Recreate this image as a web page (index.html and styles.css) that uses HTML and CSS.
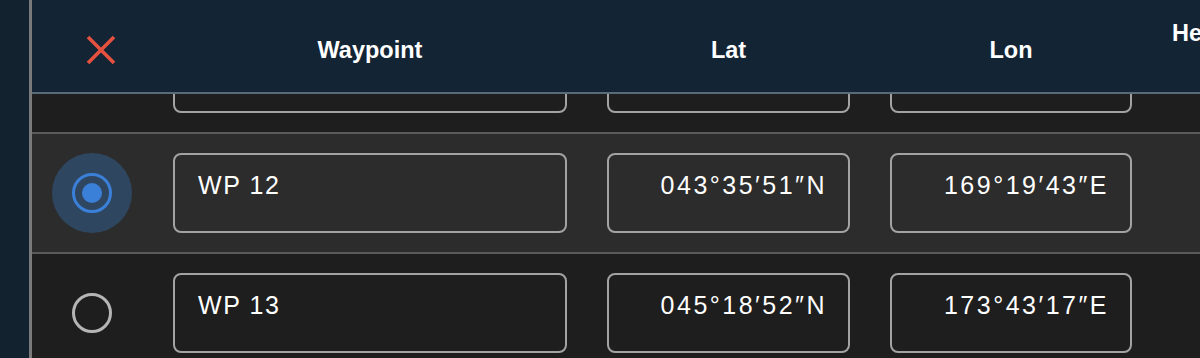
FILE: index.html
```html
<!DOCTYPE html>
<html lang="en">
<head>
<meta charset="utf-8">
<title>Waypoints</title>
<link rel="stylesheet" href="styles.css">
</head>
<body>
<div class="app">
  <aside class="sidebar"></aside>
  <main class="table">
    <header class="thead">
      <div class="th th-close">
        <svg class="close-icon" width="30" height="30" viewBox="0 0 30 30" aria-label="Close">
          <path d="M2 2 L28 28 M28 2 L2 28" stroke="#e4513f" stroke-width="3.6" stroke-linecap="butt" fill="none"/>
        </svg>
      </div>
      <div class="th">Waypoint</div>
      <div class="th">Lat</div>
      <div class="th">Lon</div>
      <div class="th th-wrap">Heading to Waypoint (°T)</div>
    </header>
    <div class="viewport">
      <div class="rows">
        <div class="row">
          <div class="cell cell-sel"><span class="radio"></span></div>
          <div class="field name"></div>
          <div class="field coord"></div>
          <div class="field coord"></div>
          <div class="cell"></div>
        </div>
        <div class="row row-selected">
          <div class="cell cell-sel"><span class="halo"><span class="radio radio-on"></span></span></div>
          <div class="field name">WP 12</div>
          <div class="field coord">043°35′51″N</div>
          <div class="field coord">169°19′43″E</div>
          <div class="cell"></div>
        </div>
        <div class="row">
          <div class="cell cell-sel"><span class="radio"></span></div>
          <div class="field name">WP 13</div>
          <div class="field coord">045°18′52″N</div>
          <div class="field coord">173°43′17″E</div>
          <div class="cell"></div>
        </div>
      </div>
    </div>
  </main>
</div>
</body>
</html>
```
FILE: styles.css
```css
* { box-sizing: border-box; }
html, body {
  margin: 0;
  padding: 0;
  width: 1200px;
  height: 358px;
  overflow: hidden;
  background: #1e1e1e;
  font-family: "Liberation Sans", Arial, sans-serif;
  color: #ffffff;
}
.app {
  display: flex;
  height: 358px;
}
.sidebar {
  width: 29px;
  flex: none;
  background: #12222f;
  border-right: 3px solid #7a7a7a;
  box-sizing: content-box;
}
.table {
  flex: 1;
  display: flex;
  flex-direction: column;
  min-width: 0;
  overflow: hidden;
}
.thead {
  flex: none;
  height: 94px;
  background: #132434;
  border-bottom: 2px solid #5a6c79;
  display: grid;
  grid-template-columns: 101px 394px 243px 242px 243px;
  column-gap: 40px;
  align-items: center;
  padding-top: 8px;
}
.th {
  text-align: center;
  font-weight: 700;
  font-size: 23.5px;
  line-height: 28px;
  white-space: nowrap;
}
.th-close {
  display: flex;
  justify-content: center;
  padding-left: 37px;
}
.close-icon { display: block; }
.th-wrap {
  white-space: normal;
  align-self: start;
  margin-top: 11px;
  padding-right: 10px;
}
.viewport {
  flex: 1;
  overflow: hidden;
}
.rows {
  margin-top: -80px;
}
.row {
  height: 120px;
  border-bottom: 2px solid #5a5a5a;
  background: #1e1e1e;
  display: grid;
  grid-template-columns: 101px 394px 243px 242px 243px;
  column-gap: 40px;
  align-items: center;
}
.row-selected { background: #2c2c2c; }
.cell-sel {
  display: flex;
  justify-content: center;
  align-items: center;
  padding-left: 18px;
}
.halo {
  width: 80px;
  height: 80px;
  border-radius: 50%;
  background: #2f4660;
  display: flex;
  align-items: center;
  justify-content: center;
}
.radio {
  display: block;
  width: 40px;
  height: 40px;
  border-radius: 50%;
  border: 3px solid #b5b5b5;
}
.radio-on {
  border-color: #3a7fd8;
  display: flex;
  align-items: center;
  justify-content: center;
}
.radio-on::after {
  content: "";
  width: 20px;
  height: 20px;
  border-radius: 50%;
  background: #3a7fd8;
}
.field {
  height: 80px;
  border: 2px solid #a3a3a3;
  border-radius: 8px;
  font-size: 25px;
  line-height: 28px;
  letter-spacing: 1.6px;
  padding: 16px 22px 0 23px;
  white-space: nowrap;
}
.coord {
  text-align: right;
  letter-spacing: 2.5px;
  padding-right: 21px;
}
```
